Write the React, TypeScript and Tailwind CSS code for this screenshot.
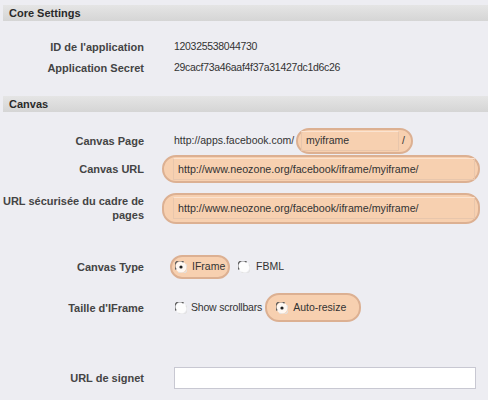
import React from "react";

function Radio({ checked }: { checked?: boolean }) {
  return (
    <svg width="12" height="12" viewBox="0 0 12 12" className="shrink-0">
      <circle cx="6" cy="6" r="5.5" fill="#ffffff" fillOpacity="0.85" />
      <path d="M1.2 8.5 A5 5 0 0 1 8.5 1.2" stroke="#5e5e5e" strokeWidth="1.3" fill="none" />
      <path d="M10.8 3.5 A5 5 0 0 1 3.5 10.8" stroke="#e2e2e2" strokeWidth="1.1" fill="none" />
      {checked && <circle cx="6" cy="6" r="1.6" fill="#222" />}
    </svg>
  );
}

function Header({ title }: { title: string }) {
  return (
    <div className="ml-[3px] h-[16px] bg-gradient-to-b from-[#e5e5e5] to-[#d5d5d5] pl-[6px] flex items-center text-[11px] font-bold text-[#2a2a2a]">
      {title}
    </div>
  );
}

function Label({ children }: { children: React.ReactNode }) {
  return (
    <div className="w-[144px] shrink-0 text-right text-[11px] font-bold text-[#444] leading-[14px]">
      {children}
    </div>
  );
}

const pill = "bg-[#f7d0b0] border-2 border-[#dcb092] rounded-[14px]";
const val = "text-[10.5px] whitespace-nowrap";

export default function App() {
  return (
    <div
      className="w-[488px] h-[400px] bg-[#ededf2] overflow-hidden text-[#333]"
      style={{ fontFamily: '"Liberation Sans", Arial, sans-serif' }}
    >
      <div className="h-[5px]" />
      <Header title="Core Settings" />
      <div className="mt-[15px] h-[21px] flex items-center">
        <Label>ID de l'application</Label>
        <div className={`ml-[30px] ${val} tracking-[-0.3px]`}>120325538044730</div>
      </div>
      <div className="h-[21px] flex items-center">
        <Label>Application Secret</Label>
        <div className={`ml-[30px] ${val} tracking-[-0.3px]`}>29cacf73a46aaf4f37a31427dc1d6c26</div>
      </div>

      <div className="h-[18px]" />
      <Header title="Canvas" />

      {/* Canvas Page */}
      <div className="mt-[16px] h-[26px] flex items-center">
        <Label>Canvas Page</Label>
        <div className={`ml-[30px] ${val} w-[122px] shrink-0`}>http://apps.facebook.com/</div>
        <div className={`${pill} h-[26px] w-[117px] flex items-center pl-[3px]`}>
          <div className={`h-[20px] w-[98px] border border-[#e8c6ac] border-t-[#fbe3d0] pl-[4px] flex items-center ${val}`}>
            myiframe
          </div>
          <span className={`ml-[3px] ${val}`}>/</span>
        </div>
      </div>

      {/* Canvas URL */}
      <div className="mt-[1px] h-[28px] flex items-center">
        <Label>Canvas URL</Label>
        <div className={`${pill} ml-[18px] h-[28px] w-[318px] flex items-center pl-[9px]`}>
          <div className="h-[22px] w-[302px] border border-[#e8c6ac] border-t-[#fbe3d0] pl-[4px] flex items-center text-[10.7px] whitespace-nowrap">
            http://www.neozone.org/facebook/iframe/myiframe/
          </div>
        </div>
      </div>

      {/* URL sécurisée */}
      <div className="mt-[8px] h-[34px] flex items-center">
        <Label>
          URL sécurisée du cadre de
          <br />
          pages
        </Label>
        <div className={`${pill} ml-[18px] h-[31px] w-[318px] flex items-center pl-[9px]`}>
          <div className="h-[22px] w-[302px] border border-[#e8c6ac] border-t-[#fbe3d0] pl-[4px] flex items-center text-[10.7px] whitespace-nowrap">
            http://www.neozone.org/facebook/iframe/myiframe/
          </div>
        </div>
      </div>

      {/* Canvas Type */}
      <div className="mt-[30px] h-[24px] flex items-center">
        <Label>Canvas Type</Label>
        <div className={`${pill} ml-[26px] h-[24px] w-[60px] flex items-center pl-[3px] gap-[5px] ${val}`}>
          <Radio checked />
          <span>IFrame</span>
        </div>
        <div className={`ml-[8px] flex items-center gap-[6px] ${val}`}>
          <Radio />
          <span>FBML</span>
        </div>
      </div>

      {/* Taille d'IFrame */}
      <div className="mt-[14px] h-[29px] flex items-center">
        <Label>Taille d'IFrame</Label>
        <div className={`ml-[31px] flex items-center gap-[4px] ${val} tracking-[-0.2px]`}>
          <Radio />
          <span>Show scrollbars</span>
        </div>
        <div className={`${pill} ml-[3px] h-[29px] w-[96px] flex items-center pl-[9px] gap-[5px] ${val}`}>
          <Radio checked />
          <span>Auto-resize</span>
        </div>
      </div>

      {/* URL de signet */}
      <div className="mt-[44px] h-[24px] flex items-center">
        <Label>URL de signet</Label>
        <div className="ml-[30px] h-[22px] w-[302px] bg-white border border-[#c8c8d2]" />
      </div>
    </div>
  );
}
